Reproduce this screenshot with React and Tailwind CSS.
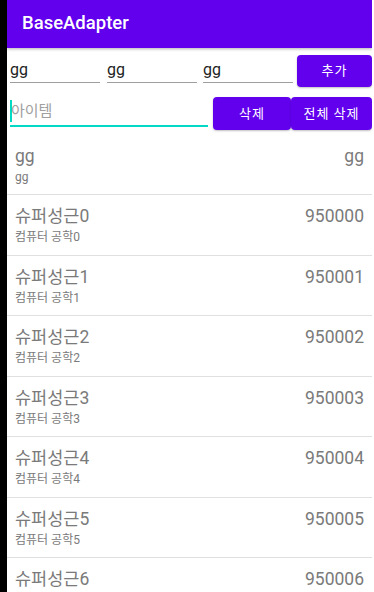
import React from 'react';

const font = { fontFamily: 'Roboto, "Noto Sans CJK KR", sans-serif' };

const items = [
  { name: 'gg', major: 'gg', num: 'gg' },
  ...Array.from({ length: 7 }, (_, i) => ({
    name: `슈퍼성근${i}`,
    major: `컴퓨터 공학${i}`,
    num: `95000${i}`,
  })),
];

const Field = ({ value, className }) => (
  <div className={`h-[28px] border-b border-[#9e9e9e] flex items-end pb-[4px] text-[16px] leading-none text-[#222] ${className}`}>
    {value}
  </div>
);

const PurpleButton = ({ children, className }) => (
  <div className={`bg-[#6200ee] rounded-[4px] text-white text-[13px] tracking-[1px] flex items-center justify-center shadow-[0_1px_2px_rgba(0,0,0,0.25)] ${className}`}>
    {children}
  </div>
);

export default function App() {
  return (
    <div className="flex w-[374px] h-[592px] overflow-hidden bg-white" style={font}>
      <div className="w-[7px] bg-black shrink-0" />
      <div className="flex-1 flex flex-col">
        <div className="h-[48px] bg-[#6200ee] flex items-center pl-[15px] text-white text-[18.5px] font-medium shadow-[0_1px_3px_rgba(0,0,0,0.3)] shrink-0">
          BaseAdapter
        </div>

        <div className="flex items-start pl-[3px] mt-[7px]">
          <Field value="gg" className="w-[90px]" />
          <Field value="gg" className="w-[90px] ml-[7px]" />
          <Field value="gg" className="w-[90px] ml-[6px]" />
          <PurpleButton className="w-[75px] h-[32px] ml-[4px]">추가</PurpleButton>
        </div>

        <div className="flex items-start pl-[3px] mt-[10px]">
          <div className="w-[198px] h-[30px] border-b-2 border-[#03dac5] flex items-center">
            <div className="w-[2px] h-[22px] bg-[#03dac5]" />
            <span className="text-[15px] text-[#a0a0a0] -ml-[1px]">아이템</span>
          </div>
          <PurpleButton className="w-[78px] h-[33px] ml-[5px]">삭제</PurpleButton>
          <PurpleButton className="w-[81px] h-[33px]">전체 삭제</PurpleButton>
        </div>

        <div className="mt-[4.5px] flex flex-col">
          {items.map((it, i) => (
            <div key={i} className="h-[60.5px] border-b border-[#e0e0e0] shrink-0 flex justify-between pl-[8px] pr-[8px] pt-[11px] text-[#7a7a7a]">
              <div className="flex flex-col">
                <span className="text-[17.5px] leading-[21px]">{it.name}</span>
                <span className="text-[12px] leading-[15px] mt-[3px]">{it.major}</span>
              </div>
              <span className="text-[17.5px] leading-[21px]">{it.num}</span>
            </div>
          ))}
        </div>
      </div>
      <div className="w-[2px] bg-white shrink-0" />
    </div>
  );
}
